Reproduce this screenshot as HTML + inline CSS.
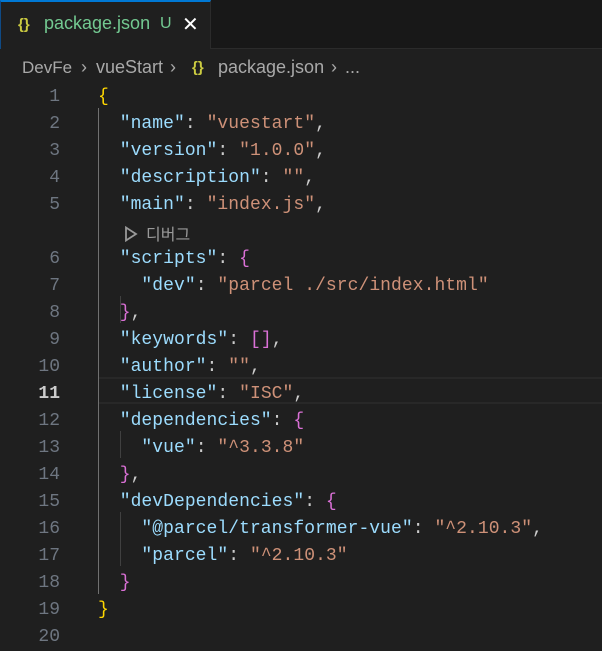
<!DOCTYPE html>
<html><head><meta charset="utf-8"><style>
*{margin:0;padding:0;box-sizing:border-box}
body{width:602px;height:651px;background:#1f1f1f;overflow:hidden;position:relative;font-family:"Liberation Sans","Noto Sans CJK KR",sans-serif}
.tabbar{position:absolute;left:0;top:0;width:602px;height:49px;background:#181818;border-bottom:1px solid #2b2b2b}
.tab{position:absolute;left:0;top:0;width:211px;height:49px;background:#1f1f1f;border-top:2px solid #0078d4;border-right:1px solid #2b2b2b;border-left:1px solid #0f4a85}
.tab span{position:absolute;top:11px;font-size:18px}
.bc{position:absolute;top:57px;font-size:18px;color:#a9a9a9;white-space:pre}
.ln{position:absolute;left:0;width:60px;text-align:right;font-family:"Liberation Mono",monospace;font-size:18px;color:#6e7681}
.code{position:absolute;left:98px;font-family:"Liberation Mono",monospace;font-size:18px;letter-spacing:0.05px;white-space:pre;color:#cccccc}
.k{color:#9cdcfe}.s{color:#ce9178}.y{color:#ffd700}.p{color:#da70d6}.b{color:#179fff}
.g{position:absolute;width:1px}
</style></head><body>
<div class="tabbar"></div>
<div class="tab">
<span style="left:17px;color:#cbcb41;font-weight:bold;font-size:15px;top:14px">{}</span>
<span style="left:43px;color:#73c991">package.json</span>
<span style="left:159px;color:#73c991;font-size:16px;top:13px">U</span>
<span style="left:181px;color:#fff;font-size:20px;top:10px">✕</span>
</div>
<div class="bc" style="left:22px;font-size:17px;top:58px">DevFe</div>
<div class="bc" style="left:81px">›</div>
<div class="bc" style="left:96px">vueStart</div>
<div class="bc" style="left:170px">›</div>
<div class="bc" style="left:192px;color:#cbcb41;font-weight:bold;font-size:15px;top:59px">{}</div>
<div class="bc" style="left:218px">package.json</div>
<div class="bc" style="left:331px">›</div>
<div class="bc" style="left:345px">...</div>
<div style="position:absolute;left:98px;top:377px;width:504px;height:27px;border-top:2px solid #282828;border-bottom:2px solid #282828"></div>
<div class="g" style="left:98px;top:108px;height:486px;background:#707070"></div>
<div class="g" style="left:120px;top:296px;height:27px;background:#404040"></div>
<div class="g" style="left:120px;top:431px;height:27px;background:#404040"></div>
<div class="g" style="left:120px;top:512px;height:54px;background:#404040"></div>
<div id="c"></div>
<script>
var L=[
'<span class="y">{</span>',
'  <span class="k">"name"</span>: <span class="s">"vuestart"</span>,',
'  <span class="k">"version"</span>: <span class="s">"1.0.0"</span>,',
'  <span class="k">"description"</span>: <span class="s">""</span>,',
'  <span class="k">"main"</span>: <span class="s">"index.js"</span>,',
null,
'  <span class="k">"scripts"</span>: <span class="p">{</span>',
'    <span class="k">"dev"</span>: <span class="s">"parcel ./src/index.html"</span>',
'  <span class="p">}</span>,',
'  <span class="k">"keywords"</span>: <span class="p">[]</span>,',
'  <span class="k">"author"</span>: <span class="s">""</span>,',
'  <span class="k">"license"</span>: <span class="s">"ISC"</span>,',
'  <span class="k">"dependencies"</span>: <span class="p">{</span>',
'    <span class="k">"vue"</span>: <span class="s">"^3.3.8"</span>',
'  <span class="p">}</span>,',
'  <span class="k">"devDependencies"</span>: <span class="p">{</span>',
'    <span class="k">"@parcel/transformer-vue"</span>: <span class="s">"^2.10.3"</span>,',
'    <span class="k">"parcel"</span>: <span class="s">"^2.10.3"</span>',
'  <span class="p">}</span>',
'<span class="y">}</span>',
''];
var h='',n=1;
for(var i=0;i<L.length;i++){var t=81+27*i;
if(L[i]===null){h+='<div style="position:absolute;left:124px;top:'+(t+5)+'px;font-size:16px;color:#999"><svg width="14" height="16" style="vertical-align:-2px;margin-right:8px"><path d="M2 1.5 L12 8 L2 14.5 Z" fill="none" stroke="#999" stroke-width="1.8"/></svg>디버그</div>';continue;}
h+='<div class="ln" style="top:'+(t+6)+'px;'+(n==11?'color:#ccc;font-weight:bold':'')+'">'+n+'</div><div class="code" style="top:'+(t+6)+'px">'+L[i]+'</div>';n++;}
document.getElementById('c').innerHTML=h;
</script>
</body></html>
